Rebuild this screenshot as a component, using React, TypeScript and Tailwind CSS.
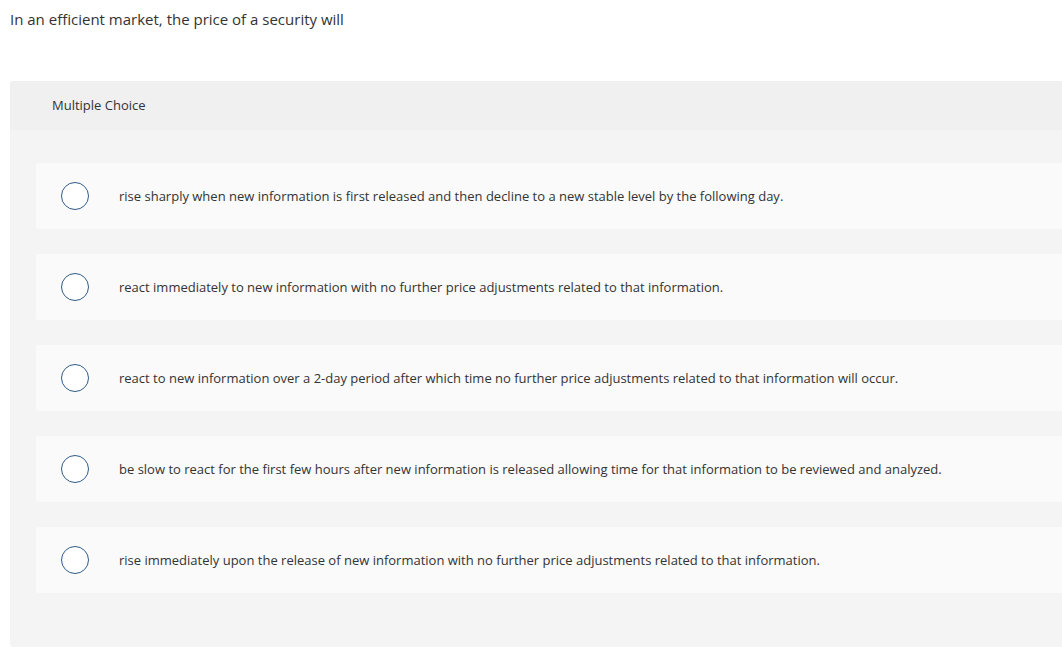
import * as React from 'react';

const OPTIONS = [
  'rise sharply when new information is first released and then decline to a new stable level by the following day.',
  'react immediately to new information with no further price adjustments related to that information.',
  'react to new information over a 2-day period after which time no further price adjustments related to that information will occur.',
  'be slow to react for the first few hours after new information is released allowing time for that information to be reviewed and analyzed.',
  'rise immediately upon the release of new information with no further price adjustments related to that information.',
];

export default function App() {
  return (
    <div className="w-[1062px] h-[669px] overflow-hidden bg-white font-['Open_Sans',sans-serif] text-[#333]">
      <p className="pl-[10px] pt-[9px] text-[15px] leading-[20px]">
        In an efficient market, the price of a security will
      </p>

      <div className="ml-[10px] mt-[52px] w-[1080px] rounded-[3px] bg-[#f4f4f4]">
        <div className="h-[49px] flex items-center pl-[42px] bg-[#f0f0f0] rounded-t-[3px] text-[13px]">
          <span className="pt-[1px]">Multiple Choice</span>
        </div>

        <div className="pt-[33px] pb-[54px] pl-[26px] flex flex-col gap-[25px]">
          {OPTIONS.map((opt) => (
            <div key={opt} className="h-[66px] flex items-center bg-[#fafafa] rounded-[3px]">
              <div className="ml-[25px] w-[28px] h-[28px] rounded-full border-[1.5px] border-[#2f5b88] bg-white shrink-0" />
              <span className="ml-[30px] pt-[2px] text-[13px]">{opt}</span>
            </div>
          ))}
        </div>
      </div>
    </div>
  );
}
